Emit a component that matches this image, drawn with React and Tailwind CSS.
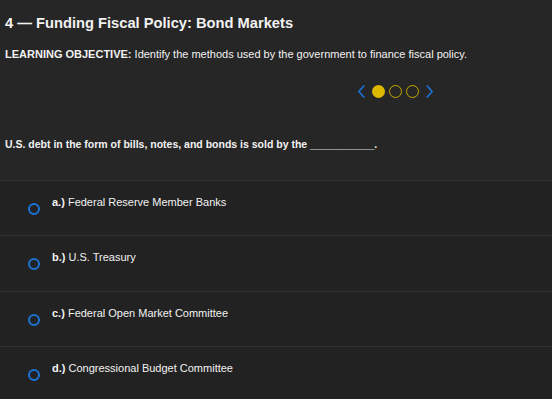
import React from "react";

const answers = [
  { l: "a.)", t: "Federal Reserve Member Banks", h: "h-[55px]" },
  { l: "b.)", t: "U.S. Treasury", h: "h-[56px]" },
  { l: "c.)", t: "Federal Open Market Committee", h: "h-[55px]" },
  { l: "d.)", t: "Congressional Budget Committee", h: "h-[53px]" },
];

export default function App() {
  return (
    <div className="w-[552px] h-[399px] overflow-hidden bg-[#262626] text-[#f2f2f2] font-['Liberation_Sans',sans-serif]">
      <div className="px-[5px] pt-[13px]">
        <h1 className="text-[14.7px] leading-[20px] font-bold">4 — Funding Fiscal Policy: Bond Markets</h1>
        <p className="mt-[14px] text-[11px] leading-[14px]">
          <span className="font-bold">LEARNING OBJECTIVE:</span> Identify the methods used by the government to finance fiscal policy.
        </p>
      </div>
      <div className="flex items-center gap-[4px] pl-[358px] mt-[22px] h-[16px]">
        <svg width="7" height="13" viewBox="0 0 7 13" className="mr-[3px]">
          <path d="M6.3 0.5 L0.8 6.5 L6.3 12.5" fill="none" stroke="#1b74d8" strokeWidth="1.6" />
        </svg>
        <span className="w-[13px] h-[13px] rounded-full bg-[#dcb900]" />
        <span className="w-[13px] h-[13px] rounded-full border-[1.5px] border-[#c9a800]" />
        <span className="w-[13px] h-[13px] rounded-full border-[1.5px] border-[#c9a800]" />
        <svg width="7" height="13" viewBox="0 0 7 13" className="ml-[3px]">
          <path d="M0.7 0.5 L6.2 6.5 L0.7 12.5" fill="none" stroke="#1b74d8" strokeWidth="1.6" />
        </svg>
      </div>
      <p className="px-[5px] mt-[38px] text-[10.5px] leading-[14px] font-bold">
        U.S. debt in the form of bills, notes, and bonds is sold by the ___________.
      </p>
      <div className="mt-[29px] bg-[#222222]">
        {answers.map((a) => (
          <div key={a.l} className={`${a.h} border-t border-[#333333] flex items-start pl-[28px] pt-[14px]`}>
            <span className="mt-[8px] w-[12px] h-[12px] rounded-full border-2 border-[#1b74d8] shrink-0" />
            <span className="ml-[12px] text-[11px] leading-[14px]">
              <span className="font-bold">{a.l}</span> {a.t}
            </span>
          </div>
        ))}
      </div>
    </div>
  );
}
